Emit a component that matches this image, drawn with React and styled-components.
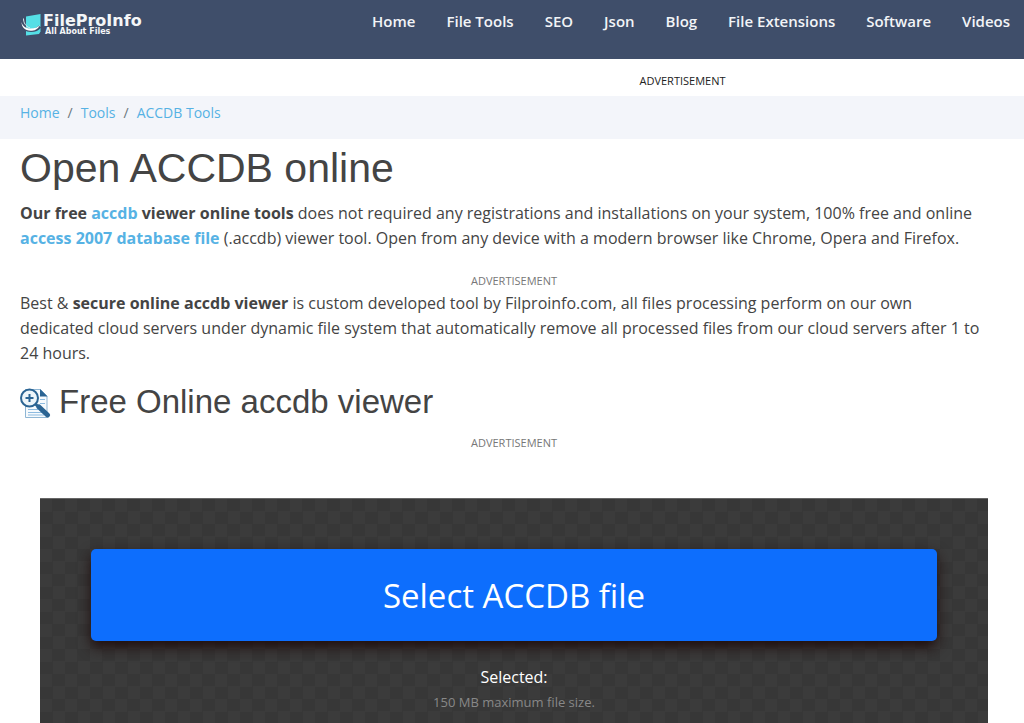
import React from "react";
import styled, { createGlobalStyle } from "styled-components";

const GlobalStyle = createGlobalStyle`
  *, *::before, *::after { box-sizing: border-box; }
  body {
    margin: 0;
    background: #fff;
    color: #444;
    font-family: "Open Sans", sans-serif;
    font-size: 16px;
    line-height: 25px;
  }
  a { color: #56b2e4; text-decoration: none; }
`;

const Header = styled.header`
  display: flex;
  align-items: flex-start;
  justify-content: space-between;
  height: 59px;
  padding: 9px 14px 0 20px;
  background: #3f4e6a;
`;

const Brand = styled.a`
  display: block;
  svg { display: block; margin-top: 1px; }
`;

const Nav = styled.nav`
  display: flex;
  gap: 31px;
`;

const NavLink = styled.a`
  color: #f2f4f7;
  font-size: 15px;
  font-weight: 600;
  line-height: 25px;
`;

const AdLabel = styled.div`
  color: ${(p) => (p.$dark ? "#222" : "#777")};
  font-size: 11px;
  line-height: 20px;
  text-align: center;
`;

const TopAd = styled.div`
  height: 37px;
  padding: 12px 0 0 341px;
`;

const Breadcrumbs = styled.nav`
  height: 43px;
  padding: 4px 20px;
  background: #f3f5fa;
  font-size: 14px;
  ol { display: flex; margin: 0; padding: 0; list-style: none; }
  li + li::before { content: "/"; padding: 0 8px; color: #6c757d; }
`;

const Content = styled.main`
  padding: 5px 16px 0 20px;
`;

const Title = styled.h1`
  margin: 0 0 8px;
  font-family: "Liberation Sans", Arial, sans-serif;
  font-size: 41px;
  font-weight: 400;
  line-height: 49px;
`;

const Subtitle = styled.h2`
  display: flex;
  align-items: center;
  gap: 8px;
  margin: 16px 0 11px;
  font-family: "Liberation Sans", Arial, sans-serif;
  font-size: 33px;
  font-weight: 400;
  line-height: 40px;
`;

const Text = styled.p`
  margin: 0;
  padding-right: 24px;
`;

const InlineAd = styled.div`
  padding-top: 20px;
`;

const Uploader = styled.form`
  margin: 45px 20px 0;
  padding: 50px 51px 8px;
  background: repeating-conic-gradient(#373737 0 25%, #3b3b3b 0 50%) 0 0 / 25px 25px;
  border-top: 1px solid #666;
  text-align: center;
`;

const SelectButton = styled.button`
  display: block;
  width: 100%;
  height: 92px;
  margin-bottom: 24px;
  border: 0;
  border-radius: 5px;
  background: #0d6efd;
  box-shadow: 0 6px 14px #1e0c0c;
  color: #fff;
  font: 400 33px/49px "Open Sans", sans-serif;
`;

const Selected = styled.div`
  color: #fff;
`;

const Limit = styled.div`
  color: #888;
  font-size: 13px;
`;

function Logo() {
  return (
    <svg width="130" height="28" viewBox="0 0 130 28" role="img" aria-label="FileProInfo, All About Files">
      <path d="M6 6.500 20.500 4v17.500L19 24 6 25.500z" fill="#55dfe6" />
      <path d="M2 13c1 5 4 7.500 9 7.500 4 0 7-1.500 9-4" fill="none" stroke="#3f4e6a" strokeWidth="3" />
      <path d="M1.500 12c1 4 4 6.500 9 6.500 4 0 7.500-1 9.500-3.500-2 4.500-5.500 5.800-9.500 5.800-5.500 0-9-4-9-8.800z" fill="#fff" />
      <path d="M3.500 8.500c0 4 2 8 6.500 9.500" fill="none" stroke="#dce6eb" strokeWidth="1" />
      <g fill="#f4f6f8" fontFamily="DejaVu Sans, Verdana, sans-serif" fontWeight="700">
        <text x="23" y="16" fontSize="16">FileProInfo</text>
        <text x="25" y="24" fontSize="8">All About Files</text>
      </g>
    </svg>
  );
}

function ViewerIcon() {
  return (
    <svg width="31" height="32" viewBox="0 0 31 32" aria-hidden="true">
      <path d="M5.500 3.500h15L27 10v21.500H5.500z" fill="#f6fafd" stroke="#8fb6d4" strokeWidth="1" />
      <path d="M20 3v7.500h7.500z" fill="#2b6493" />
      <path d="M8 23.500h10M8 26.500h14M8 29h16M20 13.500h5M20 17.500h5" stroke="#8dbbe0" strokeWidth="1" />
      <circle cx="9.500" cy="12" r="8.500" fill="#edf5fa" stroke="#2b6493" strokeWidth="2" />
      <path d="M5.500 12h8M9.500 8v8" stroke="#2b6493" strokeWidth="2" />
      <path d="m15.500 18 4 4" stroke="#2b6493" strokeWidth="3" />
      <path d="m19 21 8.500 8" stroke="#2b6493" strokeWidth="5" strokeLinecap="round" />
    </svg>
  );
}

const links = ["Home", "File Tools", "SEO", "Json", "Blog", "File Extensions", "Software", "Videos"];

export default function App() {
  return (
    <>
      <GlobalStyle />
      <Header>
        <Brand href="#"><Logo /></Brand>
        <Nav aria-label="Main">
          {links.map((l) => <NavLink href="#" key={l}>{l}</NavLink>)}
        </Nav>
      </Header>
      <TopAd><AdLabel $dark>ADVERTISEMENT</AdLabel></TopAd>
      <Breadcrumbs aria-label="Breadcrumb">
        <ol>
          <li><a href="#">Home</a></li>
          <li><a href="#">Tools</a></li>
          <li><a href="#">ACCDB Tools</a></li>
        </ol>
      </Breadcrumbs>
      <Content>
        <Title>Open ACCDB online</Title>
        <Text>
          <b>Our free <a href="#">accdb</a> viewer online tools</b> does not required any registrations and
          installations on your system, 100% free and online <b><a href="#">access 2007 database file</a></b> (.accdb)
          viewer tool. Open from any device with a modern browser like Chrome, Opera and Firefox.
        </Text>
        <InlineAd><AdLabel>ADVERTISEMENT</AdLabel></InlineAd>
        <Text>
          Best &amp; <b>secure online accdb viewer</b> is custom developed tool by Filproinfo.com, all files processing
          perform on our own dedicated cloud servers under dynamic file system that automatically remove all processed
          files from our cloud servers after 1 to 24 hours.
        </Text>
        <Subtitle><ViewerIcon />Free Online accdb viewer</Subtitle>
        <AdLabel>ADVERTISEMENT</AdLabel>
        <Uploader>
          <SelectButton type="button">Select ACCDB file</SelectButton>
          <Selected>Selected:</Selected>
          <Limit>150 MB maximum file size.</Limit>
        </Uploader>
      </Content>
    </>
  );
}
